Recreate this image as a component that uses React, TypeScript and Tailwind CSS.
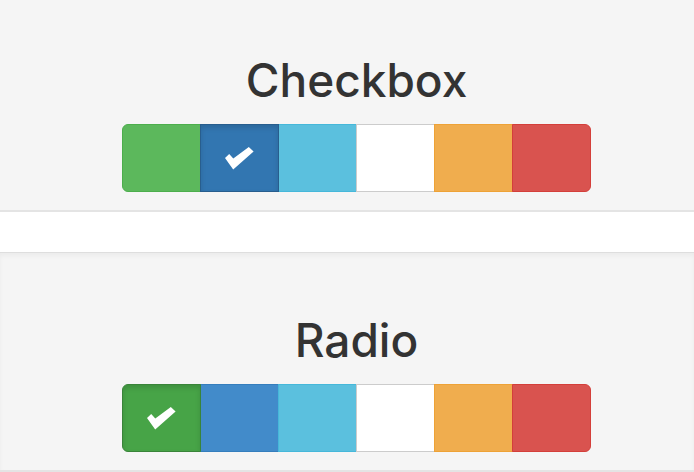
import React from "react";

type Btn = { bg: string; border: string; active?: boolean };

function Check() {
  return (
    <svg width="29" height="23" viewBox="0 0 29 23" className="block">
      <polygon points="0,11 4.2,7 8.3,11.4 23.8,0 28.6,4.6 8.2,22.6" fill="#ffffff" />
    </svg>
  );
}

function Group({ items }: { items: Btn[] }) {
  return (
    <div className="flex">
      {items.map((b, i) => (
        <div
          key={i}
          className={
            "relative flex h-[68px] w-[79px] items-center justify-center border " +
            (i > 0 ? "-ml-px " : "") +
            (i === 0 ? "rounded-l-[6px] " : "") +
            (i === items.length - 1 ? "rounded-r-[6px] " : "") +
            (b.active ? "z-10 shadow-[inset_0_3px_5px_rgba(0,0,0,0.125)] " : "")
          }
          style={{ backgroundColor: b.bg, borderColor: b.border }}
        >
          {b.active ? <Check /> : null}
        </div>
      ))}
    </div>
  );
}

export default function App() {
  const checkbox: Btn[] = [
    { bg: "#5cb85c", border: "#4cae4c" },
    { bg: "#3276b1", border: "#285e8e", active: true },
    { bg: "#5bc0de", border: "#46b8da" },
    { bg: "#ffffff", border: "#cccccc" },
    { bg: "#f0ad4e", border: "#eea236" },
    { bg: "#d9534f", border: "#d43f3a" },
  ];
  const radio: Btn[] = [
    { bg: "#47a447", border: "#398439", active: true },
    { bg: "#428bca", border: "#357ebd" },
    { bg: "#5bc0de", border: "#46b8da" },
    { bg: "#ffffff", border: "#cccccc" },
    { bg: "#f0ad4e", border: "#eea236" },
    { bg: "#d9534f", border: "#d43f3a" },
  ];
  return (
    <div
      className="h-[472px] w-[694px] overflow-hidden bg-[#f5f5f5] text-[#333333]"
      style={{ fontFamily: 'Inter, "Liberation Sans", Arial, sans-serif' }}
    >
      <section className="flex h-[210px] flex-col items-center pl-[19px] pt-[55px]">
        <h1 className="mb-[19px] text-[46px] leading-[50px] font-medium">Checkbox</h1>
        <Group items={checkbox} />
      </section>
      <div className="h-[43px] border-t-2 border-b border-t-[#e4e4e4] border-b-[#dedede] bg-white" />
      <section className="flex h-[217px] flex-col items-center pl-[19px] pt-[62px] shadow-[inset_0_3px_4px_rgba(0,0,0,0.04)]">
        <h1 className="mb-[19px] text-[46px] leading-[50px] font-medium">Radio</h1>
        <Group items={radio} />
      </section>
      <div className="h-[2px] bg-[#e4e4e4]" />
    </div>
  );
}
